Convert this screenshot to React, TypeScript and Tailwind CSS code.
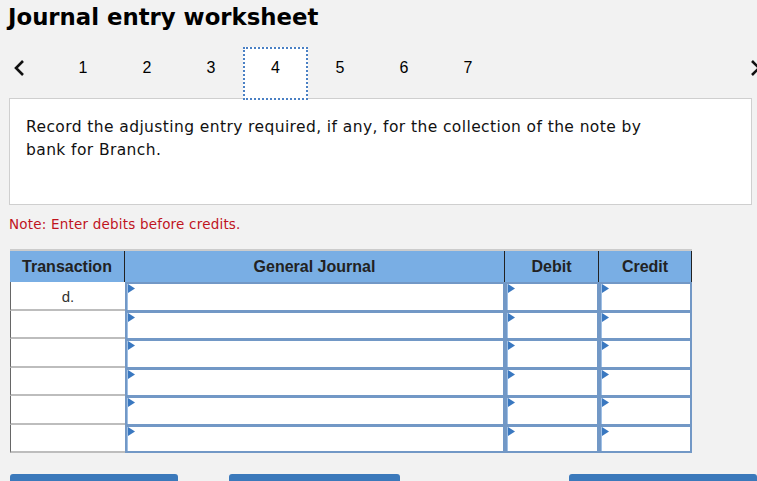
import React from "react";

const tabs = ["1", "2", "3", "4", "5", "6", "7"];

/** Petit triangle bleu en haut à gauche des champs */
function Flag() {
  return (
    <svg className="absolute left-0 top-0" width="7" height="9" viewBox="0 0 7 9">
      <path d="M0 0 L7 4.5 L0 9 Z" fill="#3a78c0" />
    </svg>
  );
}

function InputCell({ last }: { last?: boolean }) {
  return (
    <div className={`bg-[#7298c6] p-[2px] ${last ? "" : "pb-[1px]"}`}>
      <div className="relative h-full bg-white border-l border-[#9fc0e6]">
        <Flag />
      </div>
    </div>
  );
}

export default function App() {
  const rows = ["d.", "", "", "", "", ""];
  return (
    <div className="min-h-screen w-[757px] h-[481px] overflow-hidden bg-[#f2f2f2] font-['DejaVu_Sans',Verdana,sans-serif] text-black">
      {/* Title */}
      <h1 className="pl-[8px] pt-[2px] text-[22.8px] leading-[30px] font-bold">Journal entry worksheet</h1>

      {/* Step navigation */}
      <div className="mt-[15px] flex h-[51px] items-start font-['Liberation_Sans',Arial,sans-serif] text-[16px] leading-[18px]">
        <svg className="ml-[12px] mt-[12px]" width="14" height="18" viewBox="0 0 14 18">
          <path d="M11 2 L4 9 L11 16" fill="none" stroke="#111" strokeWidth="2.6" />
        </svg>
        <div className="ml-[25px] flex">
          {tabs.map((t) =>
            t === "4" ? (
              <div
                key={t}
                className="relative z-10 flex h-[53px] w-[65px] justify-center border-2 border-dotted border-[#4a80c4] bg-white pt-[10px]"
              >
                {t}
              </div>
            ) : (
              <div key={t} className="flex w-[64px] justify-center pt-[12px]">
                {t}
              </div>
            )
          )}
        </div>
        <svg className="ml-auto mr-[-6px] mt-[12px]" width="14" height="18" viewBox="0 0 14 18">
          <path d="M3 2 L10 9 L3 16" fill="none" stroke="#111" strokeWidth="2.6" />
        </svg>
      </div>

      {/* Question */}
      <div className="ml-[9px] mr-[5px] h-[107px] border border-[#cfcfcf] bg-white pl-[16px] pt-[17px] text-[15.5px] leading-[23px] tracking-[0.4px] text-[#111]">
        Record the adjusting entry required, if any, for the collection of the note by
        <br />
        bank for Branch.
      </div>

      <p className="ml-[9px] mt-[10px] text-[13.5px] leading-[18px] tracking-[0.2px] text-[#c0141e]">
        Note: Enter debits before credits.
      </p>

      {/* Journal table */}
      <div className="ml-[10px] mt-[16px] w-[682px] border-t-2 border-[#cccccc] font-['Liberation_Sans',Arial,sans-serif]">
        <div className="grid h-[31px] grid-cols-[115px_380px_94px_93px] bg-[#79aee4] text-[16px] font-bold text-[#222]">
          <div className="flex items-center justify-center border-r border-[#222]">Transaction</div>
          <div className="flex items-center justify-center border-r border-[#222]">General Journal</div>
          <div className="flex items-center justify-center border-r border-[#222]">Debit</div>
          <div className="flex items-center justify-center border-r border-[#222]">Credit</div>
        </div>
        {rows.map((r, i) => (
          <div key={i} className="grid h-[28.5px] grid-cols-[115px_380px_94px_93px]">
            <div className="flex items-start justify-center border-b-2 border-l border-b-[#bdbdbd] border-l-[#666] bg-white pt-[4px] text-[15px] text-[#333]">
              {r}
            </div>
            <InputCell last={i === rows.length - 1} />
            <InputCell last={i === rows.length - 1} />
            <InputCell last={i === rows.length - 1} />
          </div>
        ))}
      </div>

      {/* Buttons */}
      <div className="mt-[21px] flex">
        <div className="ml-[10px] h-[20px] w-[170px] rounded-t-[3px] bg-[#3b79bb]" />
        <div className="ml-[51px] h-[20px] w-[173px] rounded-t-[3px] bg-[#3b79bb]" />
        <div className="ml-[169px] h-[20px] w-[190px] rounded-t-[3px] bg-[#3b79bb]" />
      </div>
    </div>
  );
}
